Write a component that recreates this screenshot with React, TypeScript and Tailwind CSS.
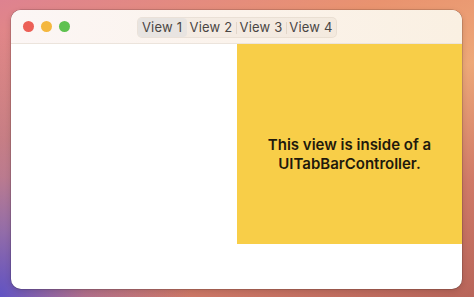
export default function App() {
  const tabs = ['View 1', 'View 2', 'View 3', 'View 4']
  return (
    <div className="w-[474px] h-[297px] overflow-hidden bg-[linear-gradient(160deg,#de8290_0%,#e9936f_30%,#eda879_50%,#d07a68_75%,#b8655a_100%)] relative font-['Inter','Liberation_Sans',sans-serif]">
      <div className="absolute inset-0 bg-[radial-gradient(40%_90%_at_0%_100%,rgba(90,80,200,0.95)_0%,rgba(140,90,170,0.5)_45%,rgba(0,0,0,0)_100%)]" />
      <div className="relative pt-[10px] pl-[11px] pr-[12px]">
        <div className="h-[279px] flex flex-col rounded-[10px] overflow-hidden bg-white shadow-[0_0_0_0.5px_rgba(0,0,0,0.25),0_2px_6px_rgba(0,0,0,0.15)]">
          <div className="h-[34px] shrink-0 flex items-center bg-[linear-gradient(90deg,#fcf6f5,#faf0e2)] border-b border-[#ece4dc] relative">
            <div className="flex items-center gap-[7px] pl-[12px]">
              <span className="w-[11px] h-[11px] rounded-full bg-[#ec5f56]" />
              <span className="w-[11px] h-[11px] rounded-full bg-[#f4b73f]" />
              <span className="w-[11px] h-[11px] rounded-full bg-[#5ec14f]" />
            </div>
            <div className="absolute left-1/2 -translate-x-1/2 top-[7px] flex h-[21px] rounded-[5px] bg-[rgba(120,90,60,0.05)] border border-[rgba(120,90,60,0.08)]">
              {tabs.map((t, i) => (
                <div key={t} className="flex items-center">
                  {i > 1 && <span className="w-px h-[12px] bg-[rgba(120,90,60,0.14)]" />}
                  <span
                    className={`w-[49px] h-[19px] flex items-center justify-center text-[13px] tracking-[0.2px] text-[#4a4644] rounded-[4px] ${
                      i === 0 ? 'bg-[#e8e4e1]' : ''
                    }`}
                  >
                    {t}
                  </span>
                </div>
              ))}
            </div>
          </div>
          <div className="flex flex-1">
            <div className="w-[226px] shrink-0" />
            <div className="flex-1 h-[200px] bg-[#f8ce48] flex items-center justify-center">
              <p className="text-center text-[15px] leading-[19px] font-semibold text-[#1f1a0c] mt-[20px]">
                This view is inside of a<br />UITabBarController.
              </p>
            </div>
          </div>
        </div>
      </div>
    </div>
  )
}
